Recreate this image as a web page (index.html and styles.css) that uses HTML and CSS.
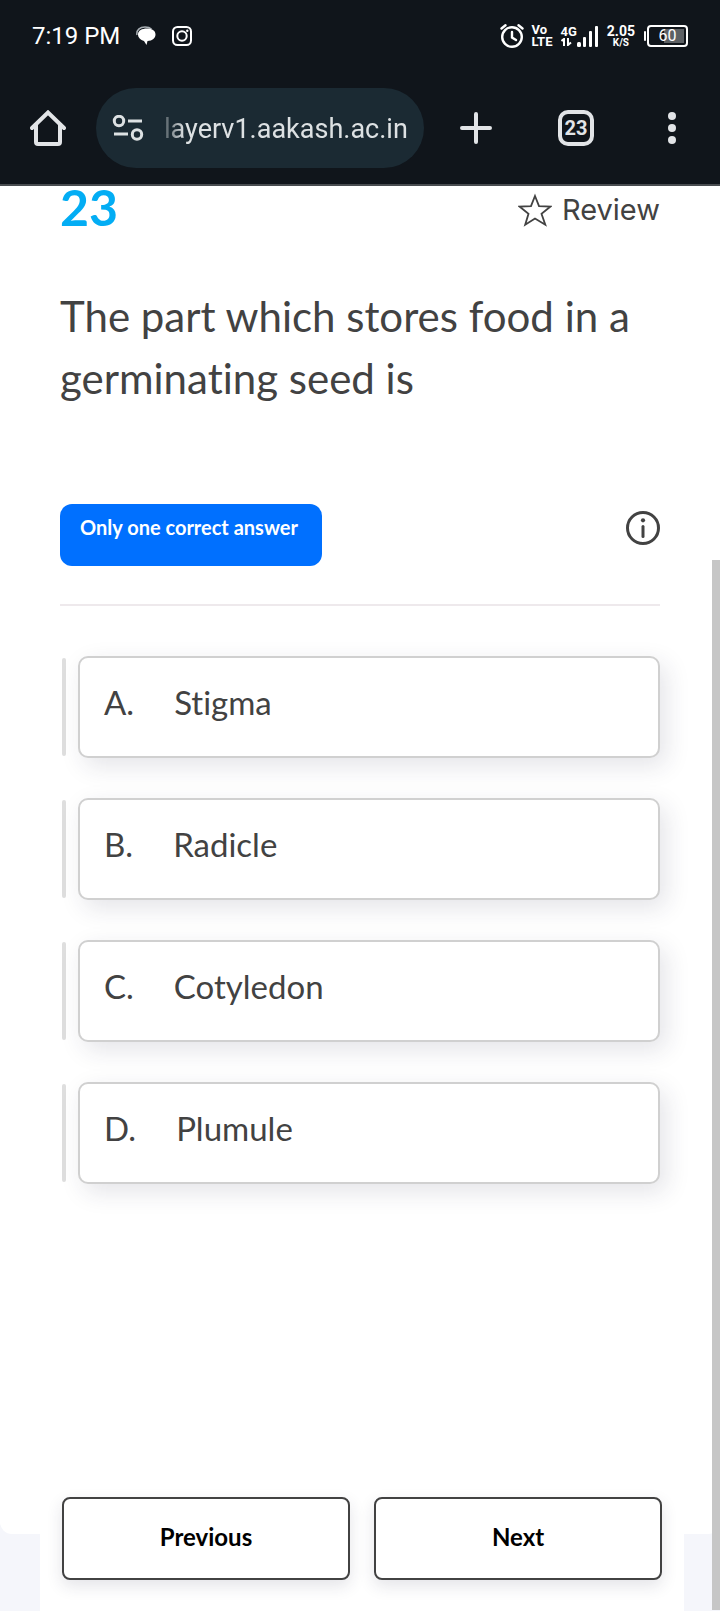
FILE: index.html
```html
<!DOCTYPE html>
<html lang="en">
<head>
<meta charset="utf-8">
<meta name="viewport" content="width=device-width, initial-scale=1">
<title>Question 23</title>
<link rel="stylesheet" href="styles.css">
</head>
<body>
<header class="chrome">
  <div class="status">
    <div class="status-group status-left">
      <span class="clock">7:19 PM</span>
      <svg width="20" height="20" viewBox="0 0 20 20" aria-hidden="true"><path d="M1 9C0 4 4 1 9 1c3 0 5 .6 6.500 2" fill="none" stroke="#aab0b5" stroke-width="1.500"/><path d="M11 2.500c5.500 0 8.500 2.500 8.500 6s-3 6.300-8 6.500L10.500 19 8 15C4.500 14 2 11.500 2 8.500c0-4 4-6 9-6z" fill="#fff"/></svg>
      <svg width="20" height="20" viewBox="0 0 20 20" fill="none" stroke="#fff" stroke-width="2" aria-hidden="true"><rect x="1" y="1" width="18" height="18" rx="4.500"/><circle cx="10" cy="10" r="4.700"/><circle cx="15.300" cy="4.700" r="1.200" fill="#fff" stroke="none"/></svg>
    </div>
    <div class="status-group status-right">
      <svg width="24" height="24" viewBox="0 0 24 24" fill="none" stroke="#fff" stroke-width="2.400" stroke-linecap="round" aria-hidden="true"><circle cx="12" cy="13" r="9.800"/><path d="M1.500 4.500 5.500 1.300M22.500 4.500 18.500 1.300M12 8v5.500l4 2.500"/></svg>
      <span class="stack"><b>Vo</b><b>LTE</b></span>
      <span class="network">
        <span class="stack"><b>4G</b><svg width="11" height="8" viewBox="0 0 11 8" fill="none" stroke="#fff" stroke-width="2" aria-hidden="true"><path d="M3 8V1L.5 3M7 0v7l3-2.500"/></svg></span>
        <svg width="22" height="22" viewBox="0 0 22 22" fill="#fff" aria-hidden="true"><rect x="0" y="17" width="4" height="5" rx="1.500"/><rect x="6" y="12" width="3" height="10" rx="1"/><rect x="12" y="6" width="3" height="16" rx="1"/><rect x="18" y="1" width="3" height="21" rx="1"/></svg>
      </span>
      <span class="stack speed"><b>2.05</b><b>K/S</b></span>
      <span class="battery">60</span>
    </div>
  </div>
  <div class="toolbar">
    <button class="icon-button" aria-label="Home"><svg width="36" height="36" viewBox="0 0 36 36" fill="none" stroke="#e2e4e7" stroke-width="4" stroke-linecap="round" stroke-linejoin="round" aria-hidden="true"><path d="M2 18 18 2.500 34 18M6 15v17q0 2 2 2h20q2 0 2-2V15" stroke-linejoin="miter"/></svg></button>
    <div class="address">
      <svg width="32" height="26" viewBox="0 0 32 26" fill="none" stroke="#dde1e3" stroke-width="3" aria-hidden="true"><circle cx="7" cy="6" r="4.700"/><path d="M16 6h14M2 19h14"/><circle cx="25" cy="19.500" r="4.700"/></svg>
      <span class="url">layerv1.aakash.ac.in</span>
    </div>
    <div class="actions">
      <button class="icon-button" aria-label="New tab"><svg width="32" height="32" viewBox="0 0 32 32" stroke="#e2e4e7" stroke-width="4" stroke-linecap="round" aria-hidden="true"><path d="M16 2v28M2 16h28"/></svg></button>
      <button class="icon-button tabs" aria-label="23 open tabs">23</button>
      <button class="icon-button more" aria-label="More"><svg width="8" height="32" viewBox="0 0 8 32" fill="#e2e4e7" aria-hidden="true"><circle cx="4" cy="4" r="4"/><circle cx="4" cy="16" r="4"/><circle cx="4" cy="28" r="4"/></svg></button>
    </div>
  </div>
</header>

<main class="page">
  <form class="question">
    <div class="question-head">
      <span class="number">23</span>
      <button type="button" class="review"><svg width="34" height="34" viewBox="0 0 34 34" fill="none" stroke="#424242" stroke-width="1.800" aria-hidden="true"><path d="m17 3 4 10.200 11.500.3-9 7.200 3.800 11L17 25.500l-9.800 6.200 3.300-11-9-7.200 11.500-.3z"/></svg>Review</button>
    </div>
    <h1 class="prompt">The part which stores food in a germinating seed is</h1>
    <div class="meta">
      <span class="badge">Only one correct answer</span>
      <button type="button" class="icon-button" aria-label="Information"><svg width="34" height="34" viewBox="0 0 34 34" fill="none" stroke="#424242" stroke-width="3" stroke-linecap="round" aria-hidden="true"><circle cx="17" cy="17" r="15.500"/><path d="M17 15.500v10"/><circle cx="17" cy="9.300" r="2.100" fill="#424242" stroke="none"/></svg></button>
    </div>
    <div class="options">
      <div class="option"><input type="radio" name="answer" id="a"><label for="a"><span>A.</span><span>Stigma</span></label></div>
      <div class="option"><input type="radio" name="answer" id="b"><label for="b"><span>B.</span><span>Radicle</span></label></div>
      <div class="option"><input type="radio" name="answer" id="c"><label for="c"><span>C.</span><span>Cotyledon</span></label></div>
      <div class="option"><input type="radio" name="answer" id="d"><label for="d"><span>D.</span><span>Plumule</span></label></div>
    </div>
  </form>
  <nav class="pager" aria-label="Questions">
    <button>Previous</button>
    <button>Next</button>
  </nav>
  <div class="scroll-thumb"></div>
</main>
</body>
</html>
```
FILE: styles.css
```css
* { box-sizing: border-box; }

body {
  margin: 0;
  min-height: 100vh;
  display: flex;
  flex-direction: column;
  background: #f5f6fb;
  color: #424242;
  font-family: Lato, "Open Sans", sans-serif;
  font-variant-ligatures: none;
}

button {
  padding: 0;
  border: 0;
  background: none;
  color: inherit;
  font: inherit;
}

svg { display: block; flex: none; }

.chrome {
  background: #10151b;
  border-bottom: 2px solid #484c50;
  color: #fff;
  font-family: Roboto, sans-serif;
}

.status {
  display: flex;
  justify-content: space-between;
  align-items: center;
  height: 72px;
  padding: 0 32px;
}

.status-group { display: flex; align-items: center; }
.status-left { gap: 16px; }
.status-right { gap: 8px; }
.clock { font-size: 24px; line-height: 28px; }

.stack {
  display: flex;
  flex-direction: column;
  font-size: 13px;
  line-height: 12px;
}

.network { display: flex; align-items: center; }
.speed { align-items: center; font-size: 10px; line-height: 10px; }
.speed b:first-child { font-size: 14px; line-height: 14px; }

.battery {
  position: relative;
  width: 41px;
  height: 22px;
  margin-left: 4px;
  border: 2px solid #fff;
  border-radius: 4px;
  background: linear-gradient(#5c6064, #5c6064) right 2px center / 20px 14px no-repeat;
  font-size: 16px;
  line-height: 18px;
  text-align: center;
}

.battery::before {
  content: "";
  position: absolute;
  top: 4px;
  left: -5px;
  width: 2px;
  height: 10px;
  border-radius: 1px;
  background: #fff;
}

.toolbar {
  display: flex;
  align-items: center;
  gap: 30px;
  padding: 16px 44px 16px 30px;
}

.icon-button { display: block; flex: none; }

.address {
  flex: 1;
  display: flex;
  align-items: center;
  gap: 20px;
  height: 80px;
  padding: 0 14px 0 16px;
  border-radius: 40px;
  background: #1b2a33;
}

.url {
  padding-top: 2px;
  color: #dde1e3;
  font-size: 27px;
  line-height: 36px;
  -webkit-mask-image: linear-gradient(to right, #0004, #000 20px);
  mask-image: linear-gradient(to right, #0004, #000 20px);
}

.actions { display: flex; align-items: center; gap: 66px; padding-left: 6px; }
.more { padding-left: 8px; }

.tabs {
  width: 36px;
  height: 36px;
  border: 4px solid #e2e4e7;
  border-radius: 10px;
  color: #e2e4e7;
  font-size: 20px;
  font-weight: 700;
  line-height: 28px;
}

.page {
  position: relative;
  flex: 1;
  padding-bottom: 77px;
  display: flex;
}

.question {
  flex: 1;
  padding: 0 60px;
  border-radius: 0 0 12px 12px;
  background: #fff;
}

.question-head {
  display: flex;
  justify-content: space-between;
  align-items: flex-end;
  height: 42px;
}

.number { color: #03adf4; font-size: 50px; font-weight: 700; line-height: 42px; }

.review {
  display: flex;
  align-items: center;
  gap: 10px;
  font-family: Inter, sans-serif;
  font-size: 29px;
  line-height: 36px;
}

.prompt {
  margin: 57px 0 0;
  font-size: 42px;
  font-weight: 400;
  line-height: 62px;
}

.meta {
  display: flex;
  justify-content: space-between;
  align-items: flex-start;
  margin-top: 95px;
  padding-bottom: 38px;
  border-bottom: 2px solid #eee9ec;
}

.meta .icon-button { margin-top: 7px; }

.badge {
  height: 62px;
  padding: 8px 24px 8px 20px;
  border-radius: 12px;
  background: #0070ff;
  color: #fff;
  font-size: 20px;
  font-weight: 700;
  line-height: 30px;
}

.options { display: grid; gap: 40px; padding: 50px 0 0 2px; }
.option { display: flex; align-items: center; gap: 12px; }

.option input {
  appearance: none;
  width: 4px;
  height: 98px;
  margin: 0;
  border-radius: 2px;
  background: #dedede;
}

.option label {
  flex: 1;
  display: flex;
  gap: 40px;
  height: 102px;
  padding: 21px 24px;
  border: 2px solid #d0d0d0;
  border-radius: 10px;
  background: #fff;
  box-shadow: 6px 8px 24px #28284620;
  font-size: 33px;
  line-height: 46px;
}

.pager {
  position: absolute;
  left: 40px;
  right: 36px;
  bottom: 0;
  display: flex;
  gap: 24px;
  padding: 0 22px 31px;
  background: #fff;
}

.pager button {
  flex: 1;
  height: 83px;
  padding-bottom: 4px;
  border: 2px solid #424242;
  border-radius: 8px;
  background: #fff;
  box-shadow: 0 6px 16px #28284620;
  color: #000;
  font-size: 24px;
  font-weight: 700;
}

.scroll-thumb {
  position: absolute;
  top: 374px;
  right: 0;
  bottom: 1px;
  width: 8px;
  background: #c6c6c6;
}
```
